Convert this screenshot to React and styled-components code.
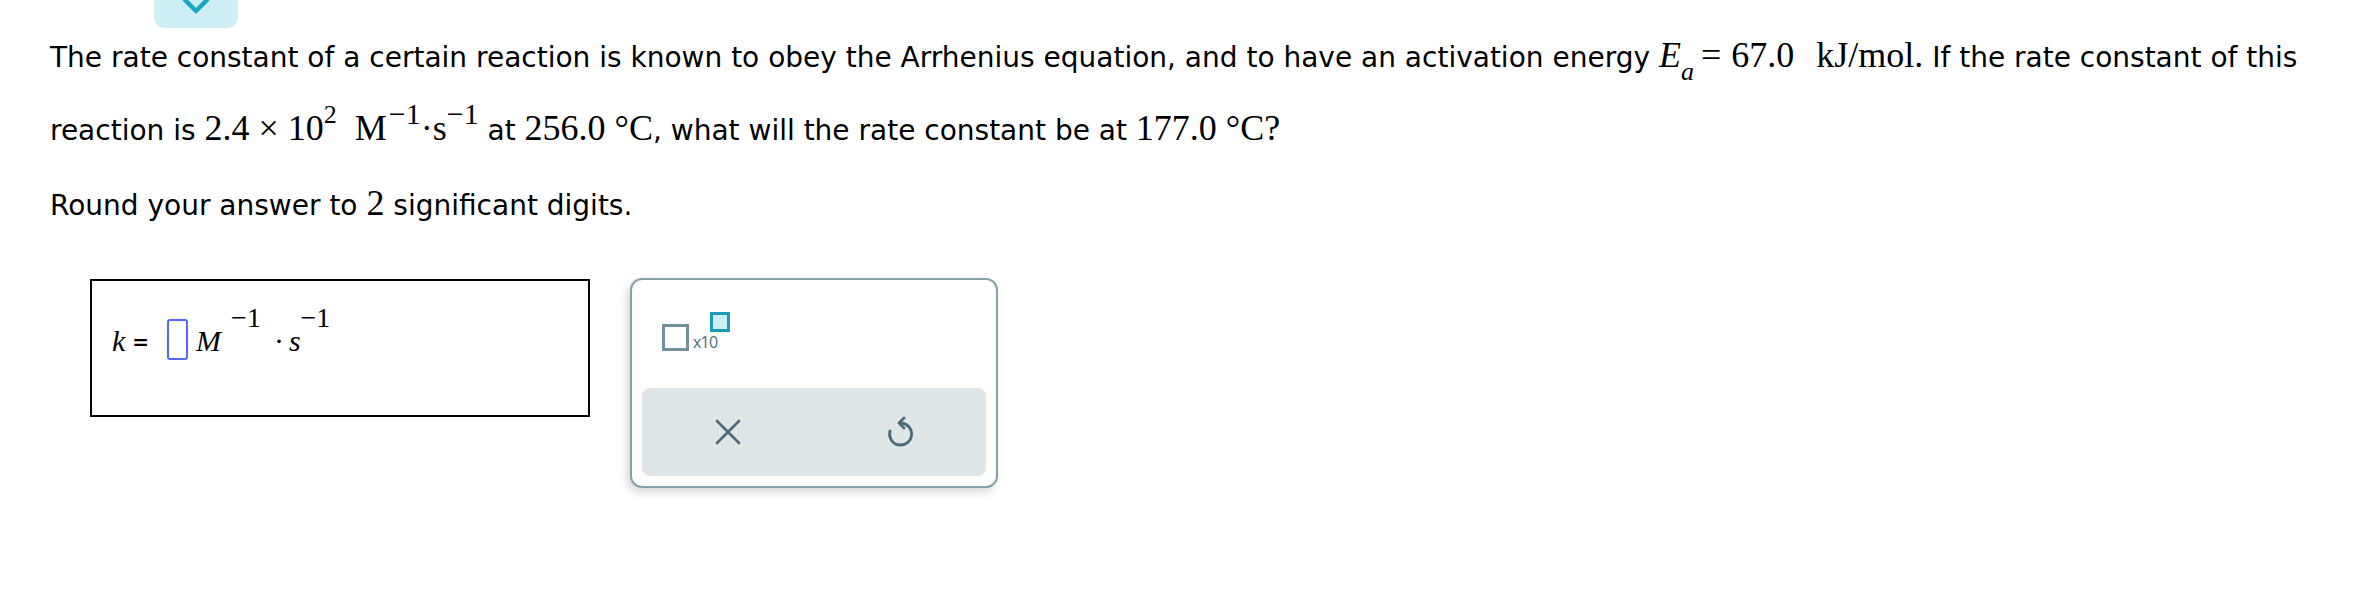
import React from "react";
import styled, { createGlobalStyle } from "styled-components";

const GlobalStyle = createGlobalStyle`
  html, body { margin: 0; padding: 0; background: #ffffff; }
  body { font-family: "DejaVu Sans", Verdana, sans-serif; color: #000000; }
`;

const Page = styled.div`
  width: 2360px;
  height: 592px;
  box-sizing: border-box;
  padding-left: 50px;
  overflow: hidden;
  display: flex;
  flex-direction: column;
`;

const TabButton = styled.button`
  align-self: flex-start;
  margin-left: 104px;
  width: 84px;
  height: 28px;
  border: none;
  padding: 0;
  background: #cdeff3;
  border-radius: 0 0 11px 11px;
  display: flex;
  align-items: flex-start;
  justify-content: center;
  overflow: hidden;
`;

const Chevron = styled.svg`
  display: block;
  width: 30px;
  height: 16px;
`;

const Question = styled.div`
  margin-top: 9px;
  display: flex;
  flex-direction: column;
  font-size: 28px;
`;

const Line = styled.div`
  height: 40px;
  line-height: 40px;
  white-space: nowrap;
  margin-top: ${(p) => p.$gap || 0}px;
`;

const MathText = styled.span`
  font-family: "Liberation Serif", "Times New Roman", serif;
  font-size: ${(p) => p.$size || 36}px;
  font-style: ${(p) => (p.$italic ? "italic" : "normal")};
  line-height: 1;
  margin-left: ${(p) => p.$ml || 0}px;
  margin-right: ${(p) => p.$mr || 0}px;
`;

const Script = styled.span`
  font-family: "Liberation Serif", "Times New Roman", serif;
  font-size: ${(p) => p.$size || 23}px;
  font-style: ${(p) => (p.$italic ? "italic" : "normal")};
  line-height: 0;
  vertical-align: ${(p) => p.$shift}px;
  margin-left: ${(p) => p.$ml || 0}px;
  margin-right: ${(p) => p.$mr || 0}px;
`;

const AnswerRow = styled.div`
  margin-top: 53px;
  display: flex;
  align-items: flex-start;
  gap: 40px;
  padding-left: 40px;
`;

const AnswerBox = styled.div`
  width: 500px;
  height: 138px;
  box-sizing: border-box;
  border: 2px solid #000000;
  margin-top: 1px;
  padding: 37px 0 0 20px;
  white-space: nowrap;
  line-height: 30px;
  font-family: "Liberation Serif", "Times New Roman", serif;
  font-size: 30px;
`;

const Var = styled.span`
  font-style: italic;
`;

const Equals = styled.span`
  font-family: "DejaVu Sans", sans-serif;
  font-weight: bold;
  font-size: 20px;
  vertical-align: 2px;
  margin: 0 18px 0 7px;
`;

const InputSlot = styled.span`
  display: inline-block;
  box-sizing: border-box;
  width: 21px;
  height: 41px;
  border: 2px solid #5367fb;
  border-radius: 3px;
  vertical-align: -9px;
  margin-right: 8px;
`;

const Dot = styled.span`
  margin: 0 5px 0 13px;
`;

const Panel = styled.div`
  width: 368px;
  height: 210px;
  box-sizing: border-box;
  border: 2px solid #86a1a9;
  border-radius: 12px;
  background: #ffffff;
  box-shadow: -3px 4px 10px rgba(0, 0, 0, 0.16);
  padding: 10px;
  display: flex;
  flex-direction: column;
  justify-content: space-between;
`;

const Tools = styled.div`
  display: flex;
  padding: 22px 0 0 20px;
`;

const ExpButton = styled.div`
  display: flex;
  align-items: flex-start;
`;

const BaseBox = styled.span`
  box-sizing: border-box;
  width: 27px;
  height: 27px;
  border: 3px solid #71909a;
  margin-top: 12px;
`;

const Times10 = styled.span`
  font-family: "Open Sans", "DejaVu Sans", sans-serif;
  font-size: 16px;
  letter-spacing: -0.8px;
  color: #4b6b78;
  line-height: 16px;
  margin: 22px 0 0 4px;
`;

const ExpBox = styled.span`
  box-sizing: border-box;
  width: 20px;
  height: 20px;
  border: 3px solid #1a9cb8;
  background: #cdeef3;
  margin-left: -7px;
`;

const ButtonBar = styled.div`
  height: 88px;
  border-radius: 8px;
  background: #dfe6e8;
  display: grid;
  grid-template-columns: 1fr 1fr;
  align-items: center;
  justify-items: center;
`;

const IconButton = styled.button`
  border: none;
  background: transparent;
  padding: 0;
  display: flex;
  align-items: center;
  justify-content: center;
  color: #4b6b78;
`;

export default function App() {
  return (
    <>
      <GlobalStyle />
      <Page>
        <TabButton aria-label="collapse">
          <Chevron viewBox="0 0 30 16">
            <path d="M3 -1 L15 11 L27 -1" fill="none" stroke="#1ba7c3" strokeWidth="4.5" strokeLinejoin="round" />
          </Chevron>
        </TabButton>
        <Question>
          <Line>
            The rate constant of a certain reaction is known to obey the Arrhenius equation, and to have an activation
            energy <MathText $italic>E</MathText>
            <Script $italic $shift={-13} $size={26}>a</Script>
            <MathText $ml={7}>=</MathText>
            <MathText $ml={10}>67.0</MathText>
            <MathText $ml={22}>kJ/mol.</MathText> If the rate constant of this
          </Line>
          <Line $gap={33}>
            reaction is <MathText>2.4 × 10</MathText>
            <Script $shift={17} $size={26}>2</Script>
            <MathText>&nbsp;&nbsp;M</MathText>
            <Script $shift={16} $size={30} $ml={2}>−1</Script>
            <MathText>·s</MathText>
            <Script $shift={16} $size={30}>−1</Script> at <MathText>256.0 °C</MathText>, what will the rate constant be at{" "}
            <MathText>177.0 °C?</MathText>
          </Line>
          <Line $gap={35}>
            Round your answer to <MathText>2</MathText> significant digits.
          </Line>
        </Question>
        <AnswerRow>
          <AnswerBox>
            <Var>k</Var>
            <Equals>=</Equals>
            <InputSlot />
            <Var>M</Var>
            <Script $size={28} $shift={24} $ml={10}>−1</Script>
            <Dot>·</Dot>
            <Var>s</Var>
            <Script $size={28} $shift={24}>−1</Script>
          </AnswerBox>
          <Panel>
            <Tools>
              <ExpButton>
                <BaseBox />
                <Times10>x10</Times10>
                <ExpBox />
              </ExpButton>
            </Tools>
            <ButtonBar>
              <IconButton aria-label="clear">
                <svg width="26" height="26" viewBox="0 0 26 26">
                  <path d="M2 2 L24 24 M24 2 L2 24" stroke="currentColor" strokeWidth="2.8" strokeLinecap="round" fill="none" />
                </svg>
              </IconButton>
              <IconButton aria-label="reset">
                <svg width="30" height="34" viewBox="0 0 30 34">
                  <path
                    d="M5 16 A11 11 0 1 0 15 8"
                    stroke="currentColor"
                    strokeWidth="2.8"
                    strokeLinecap="round"
                    fill="none"
                  />
                  <polyline
                    points="19,3 14,8 19,13"
                    stroke="currentColor"
                    strokeWidth="2.8"
                    strokeLinecap="round"
                    strokeLinejoin="round"
                    fill="none"
                  />
                </svg>
              </IconButton>
            </ButtonBar>
          </Panel>
        </AnswerRow>
      </Page>
    </>
  );
}
